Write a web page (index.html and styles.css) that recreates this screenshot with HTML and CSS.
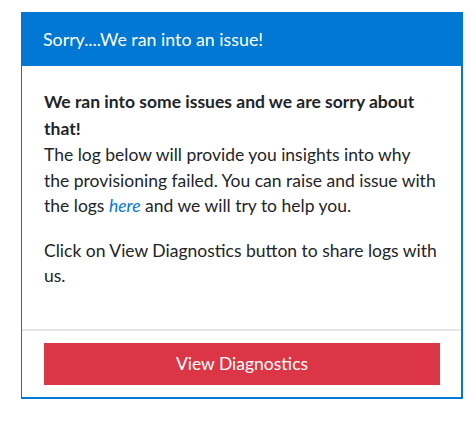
FILE: index.html
```html
<!DOCTYPE html>
<html>
<head>
<meta charset="utf-8">
<link rel="stylesheet" href="styles.css">
</head>
<body>
<div class="card">
  <div class="card-header">Sorry....We ran into an issue!</div>
  <div class="card-body">
    <p class="lead"><strong>We ran into some issues and we are sorry about that!</strong></p>
    <p>The log below will provide you insights into why the provisioning failed. You can raise and issue with the logs <a href="#">here</a> and we will try to help you.</p>
    <p>Click on View Diagnostics button to share logs with us.</p>
  </div>
  <div class="card-footer">
    <button class="btn-danger">View Diagnostics</button>
  </div>
</div>
</body>
</html>
```
FILE: styles.css
```css
html, body {
  margin: 0;
  padding: 0;
  background: #ffffff;
}
body {
  padding: 12px 0 0 21px;
  font-family: Lato, "Open Sans", sans-serif;
  font-size: 17.5px;
  color: #212529;
}
.card {
  width: 442px;
  box-sizing: border-box;
  border: 1px solid #0078d4;
  border-right-width: 2px;
  border-bottom-width: 2px;
  border-top: 0;
  background: #fff;
}
.card-header {
  background: #0078d4;
  color: #fff;
  height: 54px;
  box-sizing: border-box;
  padding: 0 22px;
  margin-left: -1px;
  margin-right: -2px;
  display: flex;
  align-items: center;
  font-size: 17.8px;
}
.card-body {
  padding: 22px 22px 40px;
}
.card-body p {
  margin: 0 0 19px;
  line-height: 25.5px;
}
.card-body p.lead {
  margin: 0;
  line-height: 27px;
}
.card-body p:last-child {
  margin-bottom: 0;
}
.card-body a {
  color: #0078d4;
  font-style: italic;
  text-decoration: none;
}
.card-footer {
  border-top: 2px solid #e6e6e6;
  padding: 12px 21px 12px 22px;
}
.btn-danger {
  display: block;
  width: 100%;
  height: 42px;
  border: 0;
  background: #dc3545;
  color: #fff;
  font-family: inherit;
  font-size: 17.5px;
  padding: 0;
}
```
